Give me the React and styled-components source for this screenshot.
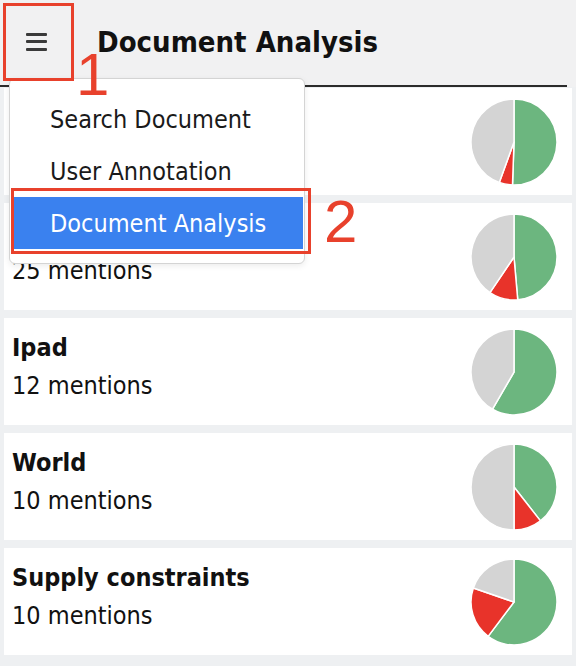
import React from 'react';
import styled, { createGlobalStyle } from 'styled-components';

const GlobalStyle = createGlobalStyle`
  html, body {
    margin: 0;
    padding: 0;
    background: #eef0f2;
    font-family: "DejaVu Sans Condensed", "DejaVu Sans", sans-serif;
  }
`;

const annotationRed = '#e8412c';

const Page = styled.div`
  position: relative;
  width: 576px;
  height: 666px;
  overflow: hidden;
  background: #eef0f2;
`;

const Header = styled.header`
  position: relative;
  display: flex;
  align-items: center;
  height: 87px;
  background: #f1f1f2;

  &::after {
    content: '';
    position: absolute;
    left: 0;
    right: 9px;
    bottom: 0;
    height: 2px;
    background: #2b2b2b;
  }
`;

const MenuButton = styled.button`
  display: flex;
  flex-direction: column;
  justify-content: center;
  gap: 4.5px;
  width: 68px;
  height: 77px;
  margin: 0 0 4px 5px;
  padding: 0 0 0 21px;
  border: none;
  background: transparent;
  cursor: pointer;
`;

const Bar = styled.span`
  display: block;
  width: 21px;
  height: 3px;
  border-radius: 1px;
  background: #3a3a3a;
`;

const Title = styled.h1`
  margin: 0 0 4px 24px;
  font-size: 29px;
  font-weight: bold;
  color: #111;
`;

const CardList = styled.main`
  display: flex;
  flex-direction: column;
  gap: 8px;
  padding: 1px 4px 0 4px;
`;

const Card = styled.section`
  display: flex;
  align-items: center;
  justify-content: space-between;
  height: 107px;
  padding: 0 14px 0 8px;
  background: #fff;
`;

const CardText = styled.div`
  display: flex;
  flex-direction: column;
  gap: 4px;
  padding-bottom: 10px;
`;

const CardTitle = styled.div`
  font-size: 25px;
  font-weight: bold;
  line-height: 34px;
  color: #111;
`;

const Mentions = styled.div`
  font-size: 25px;
  line-height: 34px;
  color: #111;
`;

const Dropdown = styled.nav`
  position: absolute;
  top: 78px;
  left: 9px;
  width: 294px;
  padding: 14px 0;
  background: #fff;
  border: 1px solid #d4d4d4;
  border-radius: 6px;
  box-shadow: 0 2px 6px rgba(0, 0, 0, 0.08);
`;

const MenuItem = styled.div`
  display: flex;
  align-items: center;
  height: 52px;
  margin: 0 1px 0 2px;
  padding-left: 38px;
  font-size: 25px;
  color: ${p => (p.active ? '#fff' : '#1a1a1a')};
  background: ${p => (p.active ? '#3a81ef' : 'transparent')};
`;

const Marker = styled.div`
  position: absolute;
  box-sizing: border-box;
  border: 3px solid ${annotationRed};
`;

const MarkerNumber = styled.div`
  position: absolute;
  font-family: "Liberation Sans", Arial, sans-serif;
  font-size: 60px;
  line-height: 1;
  color: ${annotationRed};
`;

const COLORS = { pos: '#6cb67f', neg: '#e8332a', neu: '#d4d4d4' };

function polar(cx, cy, r, deg) {
  const a = ((deg - 90) * Math.PI) / 180;
  return [cx + r * Math.cos(a), cy + r * Math.sin(a)];
}

function slicePath(cx, cy, r, from, to) {
  const [x1, y1] = polar(cx, cy, r, from);
  const [x2, y2] = polar(cx, cy, r, to);
  const large = to - from > 180 ? 1 : 0;
  return `M${cx},${cy} L${x1},${y1} A${r},${r} 0 ${large} 1 ${x2},${y2} Z`;
}

function Pie({ slices }) {
  let start = 0;
  return (
    <svg width="88" height="88" viewBox="0 0 88 88">
      {slices.map(([key, deg]) => {
        const from = start;
        start += deg;
        return (
          <path
            key={key}
            d={slicePath(44, 44, 43, from, start)}
            fill={COLORS[key]}
            stroke="#fff"
            strokeWidth="1.5"
            strokeLinejoin="round"
          />
        );
      })}
    </svg>
  );
}

const topics = [
  { title: 'Iphone', count: 41, slices: [['pos', 182], ['neg', 18], ['neu', 160]] },
  { title: 'Apple', count: 25, slices: [['pos', 175], ['neg', 39], ['neu', 146]] },
  { title: 'Ipad', count: 12, slices: [['pos', 210], ['neu', 150]] },
  { title: 'World', count: 10, slices: [['pos', 142], ['neg', 38], ['neu', 180]] },
  { title: 'Supply constraints', count: 10, slices: [['pos', 217], ['neg', 72], ['neu', 71]] }
];

const menu = ['Search Document', 'User Annotation', 'Document Analysis'];

export default function App() {
  return (
    <Page>
      <GlobalStyle />
      <Header>
        <MenuButton aria-label="menu">
          <Bar />
          <Bar />
          <Bar />
        </MenuButton>
        <Title>Document Analysis</Title>
      </Header>

      <CardList>
        {topics.map(t => (
          <Card key={t.title}>
            <CardText>
              <CardTitle>{t.title}</CardTitle>
              <Mentions>{t.count} mentions</Mentions>
            </CardText>
            <Pie slices={t.slices} />
          </Card>
        ))}
      </CardList>

      <Dropdown>
        {menu.map(item => (
          <MenuItem key={item} active={item === 'Document Analysis'}>
            {item}
          </MenuItem>
        ))}
      </Dropdown>

      <Marker style={{ left: 3, top: 3, width: 71, height: 78 }} />
      <MarkerNumber style={{ left: 76, top: 45 }}>1</MarkerNumber>
      <Marker style={{ left: 11, top: 188, width: 300, height: 66 }} />
      <MarkerNumber style={{ left: 324, top: 192 }}>2</MarkerNumber>
    </Page>
  );
}
